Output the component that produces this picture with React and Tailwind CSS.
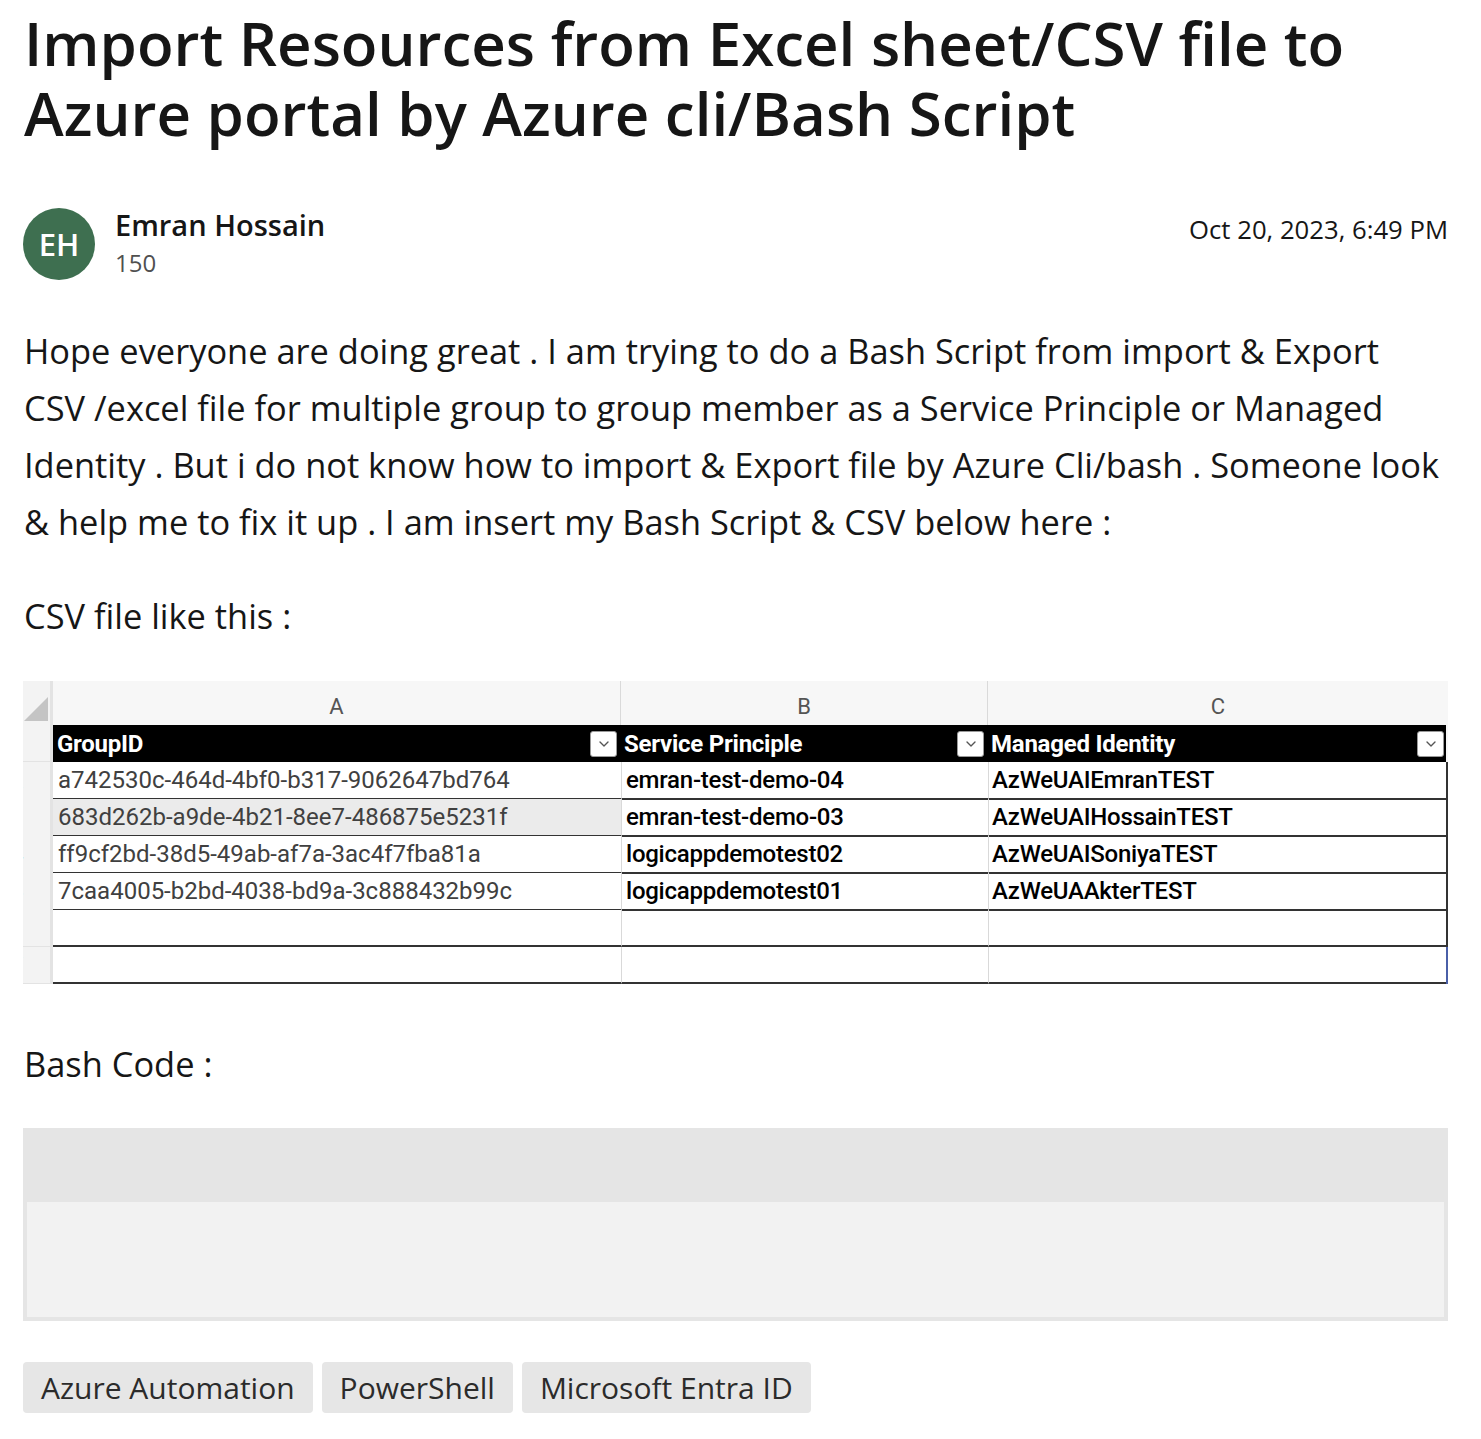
import { ChevronDown } from 'lucide-react'

const rows = [
  ['2', 'a742530c-464d-4bf0-b317-9062647bd764', 'emran-test-demo-04', 'AzWeUAIEmranTEST', false],
  ['3', '683d262b-a9de-4b21-8ee7-486875e5231f', 'emran-test-demo-03', 'AzWeUAIHossainTEST', true],
  ['4', 'ff9cf2bd-38d5-49ab-af7a-3ac4f7fba81a', 'logicappdemotest02', 'AzWeUAISoniyaTEST', false],
  ['5', '7caa4005-b2bd-4038-bd9a-3c888432b99c', 'logicappdemotest01', 'AzWeUAAkterTEST', false],
  ['6', '', '', '', false],
  ['7', '', '', '', false],
]

function FilterButton() {
  return (
    <span className="flex h-[26px] w-[27px] items-center justify-center rounded-[3px] border border-[#9a9a9a] bg-white">
      <ChevronDown size={16} strokeWidth={2} className="text-[#555]" />
    </span>
  )
}

function RowNumber({ n }) {
  return (
    <div className="flex h-full w-[30px] items-center overflow-hidden border-b border-r-[3px] border-[#e3e3e3] bg-[#f3f3f3]">
      <span className="-ml-[11px] text-[20px] text-[#444]">{n}</span>
    </div>
  )
}

function Sheet() {
  return (
    <div className="w-[1425px] font-['Roboto',sans-serif]">
      <div className="grid h-[44px] grid-cols-[30px_568px_367px_460px] bg-[#f7f7f7] text-[22px] text-[#555]">
        <div className="relative overflow-hidden border-r-[3px] border-[#e3e3e3] bg-[#f3f3f3]">
          <svg className="absolute bottom-[4px] right-[2px]" width="24" height="24" viewBox="0 0 24 24">
            <polygon points="24,0 24,24 0,24" fill="#c4c4c4" />
          </svg>
        </div>
        <div className="flex items-end justify-center border-r border-[#dadada] pb-[2px]">A</div>
        <div className="flex items-end justify-center border-r border-[#dadada] pb-[2px]">B</div>
        <div className="flex items-end justify-center pb-[2px]">C</div>
      </div>
      <div className="grid h-[37px] grid-cols-[30px_568px_367px_458px_2px]">
        <RowNumber n="1" />
        <div className="flex items-center justify-between bg-black pl-[4px] pr-[4px] text-[24px] font-bold tracking-[-0.01em] text-white">
          GroupID <FilterButton />
        </div>
        <div className="flex items-center justify-between bg-black pl-[3px] pr-[4px] text-[24px] font-bold tracking-[-0.01em] text-white">
          Service Principle <FilterButton />
        </div>
        <div className="flex items-center justify-between bg-black pl-[3px] pr-[2px] text-[24px] font-bold tracking-[-0.01em] text-white">
          Managed Identity <FilterButton />
        </div>
        <div className="bg-[#f7f7f7]" />
      </div>
      {rows.map(([n, a, b, c, sel], i) => (
        <div key={n} className="grid h-[37px] grid-cols-[30px_568px_367px_458px_2px]">
          <RowNumber n={n} />
          <div
            className={`flex items-center border-b-2 border-[#333] pl-[5px] text-[24px] text-[#404040] ${
              sel ? 'bg-[#ebebeb]' : 'bg-white'
            }`}
          >
            {a}
          </div>
          <div className="flex items-center border-b-2 border-l border-[#333] border-l-[#d9d9d9] pl-[4px] text-[24px] font-medium tracking-[-0.01em] text-black">
            {b}
          </div>
          <div className="flex items-center border-b-2 border-l border-[#333] border-l-[#d9d9d9] pl-[3px] text-[24px] font-medium tracking-[-0.01em] text-black">
            {c}
          </div>
          <div className={i === 5 ? 'bg-[#4a5fa8]' : 'bg-[#333]'} />
        </div>
      ))}
    </div>
  )
}

export default function App() {
  const para = [
    'Hope everyone are doing great . I am trying to do a Bash Script from import & Export',
    'CSV /excel file for multiple group to group member as a Service Principle or Managed',
    'Identity . But i do not know how to import & Export file by Azure Cli/bash . Someone look',
    '& help me to fix it up . I am insert my Bash Script & CSV below here :',
  ]

  return (
    <div className="min-h-screen bg-white pl-[24px] pr-[33px] pt-[8px] pb-[30px] font-['Open_Sans',sans-serif] text-[#161616]">
      <h1 className="text-[60px] font-semibold leading-[70px]">
        Import Resources from Excel sheet/CSV file to
        <br />
        Azure portal by Azure cli/Bash Script
      </h1>

      <div className="mt-[58px] flex items-start justify-between">
        <div className="flex items-center gap-[20px]">
          <div className="-ml-[1px] flex h-[72px] w-[72px] items-center justify-center rounded-full bg-[#3e6f50] text-[31px] font-semibold text-white">
            EH
          </div>
          <div className="flex flex-col">
            <span className="text-[29px] font-semibold leading-[38px] text-[#161616]">Emran Hossain</span>
            <span className="text-[24px] leading-[38px] text-[#505050]">150</span>
          </div>
        </div>
        <span className="pt-[5px] text-[25.7px] text-[#161616]">Oct 20, 2023, 6:49 PM</span>
      </div>

      <div className="mt-[40px] text-[34.4px] leading-[57px] text-[#161616]">
        {para.map((line) => (
          <div key={line} className="whitespace-nowrap">
            {line}
          </div>
        ))}
      </div>

      <p className="mt-[37px] text-[34.4px] leading-[57px]">CSV file like this :</p>

      <div className="mt-[37px] -ml-[1px]">
        <Sheet />
      </div>

      <p className="mt-[51px] text-[34.4px] leading-[57px]">Bash Code :</p>

      <div className="mt-[36px] -ml-[1px] flex h-[193px] flex-col bg-[#e5e5e5] px-[4px] pb-[4px]">
        <div className="h-[74px]" />
        <div className="flex-1 bg-[#f2f2f2]" />
      </div>

      <div className="mt-[41px] -ml-[1px] flex gap-[9px]">
        {['Azure Automation', 'PowerShell', 'Microsoft Entra ID'].map((t) => (
          <span key={t} className="flex h-[51px] items-center rounded-[4px] bg-[#e6e6e6] px-[18px] text-[30px] text-[#2b2b2b]">
            {t}
          </span>
        ))}
      </div>
    </div>
  )
}
